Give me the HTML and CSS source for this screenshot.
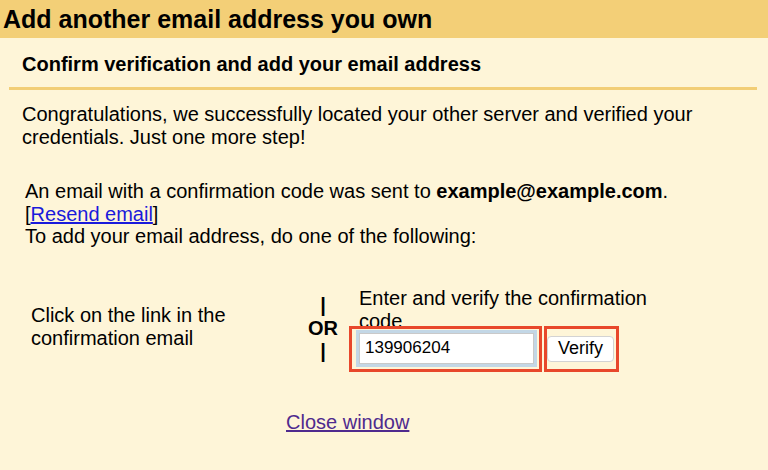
FILE: index.html
```html
<!DOCTYPE html>
<html>
<head>
<meta charset="utf-8">
<link rel="stylesheet" href="styles.css">
</head>
<body>
<div class="header"><h1 class="title">Add another email address you own</h1></div>
<div class="content">
  <h2 class="subtitle">Confirm verification and add your email address</h2>
  <div class="sep"></div>
  <p class="intro">Congratulations, we successfully located your other server and verified your credentials. Just one more step!</p>
  <div class="sent">An email with a confirmation code was sent to <b>example@example.com</b>.<br>[<a class="link" href="#">Resend email</a>]<br>To add your email address, do one of the following:</div>
  <div class="options">
    <div class="opt-link">Click on the link in the confirmation email</div>
    <div class="or"><span>|</span><span>OR</span><span>|</span></div>
    <div class="opt-code">
      <div class="label">Enter and verify the confirmation code</div>
      <div class="row">
        <span class="hl hl-input"><input class="code" type="text" value="139906204"></span>
        <span class="hl hl-btn"><button class="verify">Verify</button></span>
      </div>
    </div>
  </div>
  <div class="close"><a class="visited" href="#">Close window</a></div>
</div>
</body>
</html>
```

FILE: styles.css
```css
html, body {
  margin: 0;
  padding: 0;
  background: #fef5d8;
  font-family: "Liberation Sans", Arial, sans-serif;
  color: #000;
}
.header {
  background: #f3cf77;
  height: 38px;
  display: flex;
  align-items: center;
  padding-left: 3px;
}
.title {
  margin: 0;
  font-size: 25px;
  font-weight: bold;
  line-height: 30px;
}
.content {
  padding: 0 11px 0 9px;
}
.subtitle {
  margin: 0;
  padding: 14px 0 0 13px;
  font-size: 20px;
  line-height: 24px;
  font-weight: bold;
}
.sep {
  height: 3px;
  background: #f2ce76;
  margin-top: 11px;
}
.intro {
  margin: 13px 0 0 13px;
  font-size: 20px;
  line-height: 23px;
}
.sent {
  margin: 31px 0 0 16px;
  font-size: 20px;
  line-height: 22.5px;
}
.link {
  color: #1a1adb;
}
.options {
  display: flex;
  align-items: flex-start;
  margin-top: 39px;
  padding-left: 22px;
  font-size: 20px;
  line-height: 23px;
}
.opt-link {
  width: 220px;
  margin-right: 46px;
  margin-top: 17px;
}
.or {
  display: flex;
  flex-direction: column;
  align-items: center;
  width: 52px;
  font-weight: bold;
  margin-top: 7px;
}
.opt-code {
  width: 312px;
}
.label {
  padding-left: 10px;
}
.row {
  display: flex;
  gap: 2px;
  margin-top: -7px;
}
.hl {
  display: flex;
  box-sizing: border-box;
  border: 3px solid #e8472b;
  height: 46px;
}
.hl-input {
  padding: 4px 5px 0 7px;
}
.code {
  width: 175px;
  height: 31px;
  box-sizing: border-box;
  border: 1px solid #c9c9c9;
  box-shadow: 0 0 0 3px #c3d7e6;
  background: #fff;
  font-family: "Liberation Sans", Arial, sans-serif;
  font-size: 17px;
  padding: 0 0 0 5px;
  margin: 0;
  outline: none;
  color: #000;
}
.hl-btn {
  padding: 7px 2px 0 0;
}
.verify {
  width: 67px;
  height: 26px;
  background: #fff;
  border: 1px solid #d3d3d3;
  border-radius: 4px;
  font-family: "Liberation Sans", Arial, sans-serif;
  font-size: 18px;
  padding: 0;
  margin: 0;
  color: #000;
}
.close {
  margin-top: 39px;
  padding-left: 277px;
  font-size: 20px;
  line-height: 23px;
}
.visited {
  color: #4f2a8e;
}
```
